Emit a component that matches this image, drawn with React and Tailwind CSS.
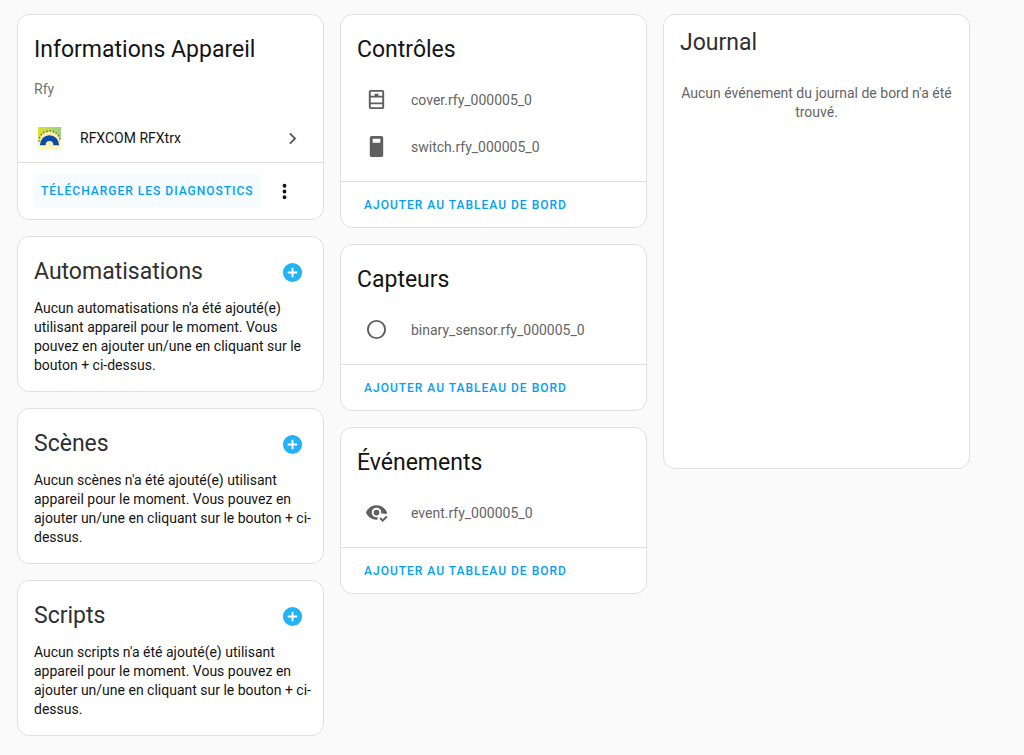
import { clsx } from "clsx";

const ICONS = {
    chevron: "M8.59,16.58L13.17,12L8.59,7.41L10,6L16,12L10,18L8.59,16.58Z",
    dots: "M12,16A2,2 0 0,1 14,18A2,2 0 0,1 12,20A2,2 0 0,1 10,18A2,2 0 0,1 12,16M12,10A2,2 0 0,1 14,12A2,2 0 0,1 12,14A2,2 0 0,1 10,12A2,2 0 0,1 12,10M12,4A2,2 0 0,1 14,6A2,2 0 0,1 12,8A2,2 0 0,1 10,6A2,2 0 0,1 12,4Z",
    plus: "M17,13H13V17H11V13H7V11H11V7H13V11H17M12,2A10,10 0 0,0 2,12A10,10 0 0,0 12,22A10,10 0 0,0 22,12A10,10 0 0,0 12,2Z",
    cover: "M6,2H18A2,2 0 0,1 20,4V20A2,2 0 0,1 18,22H6A2,2 0 0,1 4,20V4A2,2 0 0,1 6,2M6,4V8H10V6H14V8H18V4H6M6,10V15H18V10H6M6,17V20H18V17H6Z",
    switch: "M7,1H17A2,2 0 0,1 19,3V21A2,2 0 0,1 17,23H7A2,2 0 0,1 5,21V3A2,2 0 0,1 7,1M8,4V8H16V4H8Z",
    sensor: "M12,20A8,8 0 0,1 4,12A8,8 0 0,1 12,4A8,8 0 0,1 20,12A8,8 0 0,1 12,20M12,2A10,10 0 0,0 2,12A10,10 0 0,0 12,22A10,10 0 0,0 22,12A10,10 0 0,0 12,2Z",
    event: "M23.5,17L18.5,22L15,18.5L16.5,17L18.5,19L22,15.5L23.5,17M12,9A3,3 0 0,1 15,12A3,3 0 0,1 12,15A3,3 0 0,1 9,12A3,3 0 0,1 12,9M12,17C12.5,17 12.97,16.93 13.42,16.79C13.15,17.5 13,18.22 13,19V19.45L12,19.5C7,19.5 2.73,16.39 1,12C2.73,7.61 7,4.5 12,4.5C17,4.5 21.27,7.61 23,12C22.75,12.64 22.44,13.26 22.08,13.85C21.18,13.31 20.12,13 19,13C18.22,13 17.5,13.15 16.79,13.42C16.93,12.97 17,12.5 17,12A5,5 0 0,0 12,7A5,5 0 0,0 7,12A5,5 0 0,0 12,17Z",
};

const related = [
    {
        title: "Automatisations",
        text: "Aucun automatisations n'a été ajouté(e) utilisant appareil pour le moment. Vous pouvez en ajouter un/une en cliquant sur le bouton + ci-dessus.",
    },
    {
        title: "Scènes",
        text: "Aucun scènes n'a été ajouté(e) utilisant appareil pour le moment. Vous pouvez en ajouter un/une en cliquant sur le bouton + ci-dessus.",
    },
    {
        title: "Scripts",
        text: "Aucun scripts n'a été ajouté(e) utilisant appareil pour le moment. Vous pouvez en ajouter un/une en cliquant sur le bouton + ci-dessus.",
    },
];

const entityGroups = [
    {
        title: "Contrôles",
        entities: [
            { icon: "cover", name: "cover.rfy_000005_0" },
            { icon: "switch", name: "switch.rfy_000005_0" },
        ],
    },
    { title: "Capteurs", entities: [{ icon: "sensor", name: "binary_sensor.rfy_000005_0" }] },
    { title: "Événements", entities: [{ icon: "event", name: "event.rfy_000005_0" }] },
];

function Icon({ name, className }) {
    return (
        <svg viewBox="0 0 24 24" fill="currentColor" aria-hidden="true" className={clsx("size-[23px] shrink-0", className)}>
            <path fillRule="evenodd" d={ICONS[name]} />
        </svg>
    );
}

function RfxLogo() {
    return (
        <svg viewBox="0 0 24 24" aria-hidden="true" className="size-[23px] shrink-0">
            <defs>
                <linearGradient id="rfx-sky" x1="0" y1="0" x2="1" y2="0">
                    <stop offset="0" stopColor="#dbe22a" />
                    <stop offset="1" stopColor="#9bcf86" />
                </linearGradient>
            </defs>
            <rect width="24" height="24" fill="#fdf8c0" />
            <rect width="24" height="13" fill="url(#rfx-sky)" />
            <path d="M1,19V14A11,9.5 0 0,1 23,14V19Z" fill="#fbeeb0" />
            <path d="M1,15A11,10.8 0 0,1 23,15" fill="none" stroke="#6d6448" strokeWidth="1.6" strokeDasharray="1.4 2" />
            <path d="M2,19A9.9,10.4 0 0,1 22,19H16A4,4.4 0 0,0 8,19Z" fill="#0b4aa8" />
        </svg>
    );
}

function Card({ className, children }) {
    return (
        <section className={clsx("flex flex-col rounded-xl border border-[#e0e0e0] bg-white", className)}>
            {children}
        </section>
    );
}

function DashboardButton() {
    return (
        <div className="flex h-[46px] items-center border-t border-[#e0e0e0] px-4">
            <button className="h-9 rounded px-[7px] text-xs font-medium tracking-[1px] text-[#03a0f2] uppercase">
                Ajouter au tableau de bord
            </button>
        </div>
    );
}

function DeviceCard() {
    return (
        <Card>
            <h1 className="px-4 pt-[19px] text-[23px] leading-8 text-[#141414]">Informations Appareil</h1>
            <p className="mt-[13px] px-4 text-sm leading-5 text-[#727272]">Rfy</p>
            <a href="#rfxtrx" className="mt-[15px] flex h-12 items-center pr-[19px] pl-5 text-sm text-[#141414]">
                <RfxLogo />
                <span className="ml-[19px] flex-1">RFXCOM RFXtrx</span>
                <Icon name="chevron" className="text-[#5a5a5a]" />
            </a>
            <div className="flex h-[57px] items-center gap-3 border-t border-[#e0e0e0] px-4">
                <button className="h-[34px] rounded bg-[#f5fbff] px-[7px] text-xs font-medium tracking-[1px] text-[#03a0f2] uppercase">
                    Télécharger les diagnostics
                </button>
                <button aria-label="Menu" className="text-[#141414]">
                    <Icon name="dots" />
                </button>
            </div>
        </Card>
    );
}

function RelatedCard({ title, text }) {
    return (
        <Card className="pt-[19px] pr-2 pb-4 pl-4">
            <div className="flex items-center justify-between pr-[11px]">
                <h2 className="text-[23px] leading-8 text-[#303030]">{title}</h2>
                <button aria-label={`Ajouter : ${title}`} className="text-[#22b2f6]">
                    <Icon name="plus" />
                </button>
            </div>
            <p className="mt-[11px] text-sm leading-[19px] text-[#141414]">{text}</p>
        </Card>
    );
}

function EntityCard({ title, entities }) {
    return (
        <Card>
            <h2 className="px-4 pt-[19px] text-[23px] leading-8 text-[#141414]">{title}</h2>
            <ul className="mt-[10px] mb-[11px] text-sm text-[#656565]">
                {entities.map((e) => (
                    <li key={e.name} className="flex h-[47px] items-center px-6">
                        <Icon name={e.icon} className="text-[#5f5f5f]" />
                        <span className="ml-[23px]">{e.name}</span>
                    </li>
                ))}
            </ul>
            <DashboardButton />
        </Card>
    );
}

export default function App() {
    return (
        <main className="grid min-h-screen grid-cols-3 items-start gap-4 bg-[#fafafa] pt-[14px] pr-[54px] pb-[17px] pl-[17px] font-['Roboto',sans-serif]">
            <div className="flex flex-col gap-4">
                <DeviceCard />
                {related.map((r) => (
                    <RelatedCard key={r.title} {...r} />
                ))}
            </div>
            <div className="flex flex-col gap-4">
                {entityGroups.map((g) => (
                    <EntityCard key={g.title} {...g} />
                ))}
            </div>
            <Card className="min-h-[455px] px-4">
                <h2 className="pt-3 text-[23px] leading-8 text-[#303030]">Journal</h2>
                <p className="mt-[25px] text-center text-sm leading-[19px] text-[#656565]">
                    Aucun événement du journal de bord n'a été trouvé.
                </p>
            </Card>
        </main>
    );
}
